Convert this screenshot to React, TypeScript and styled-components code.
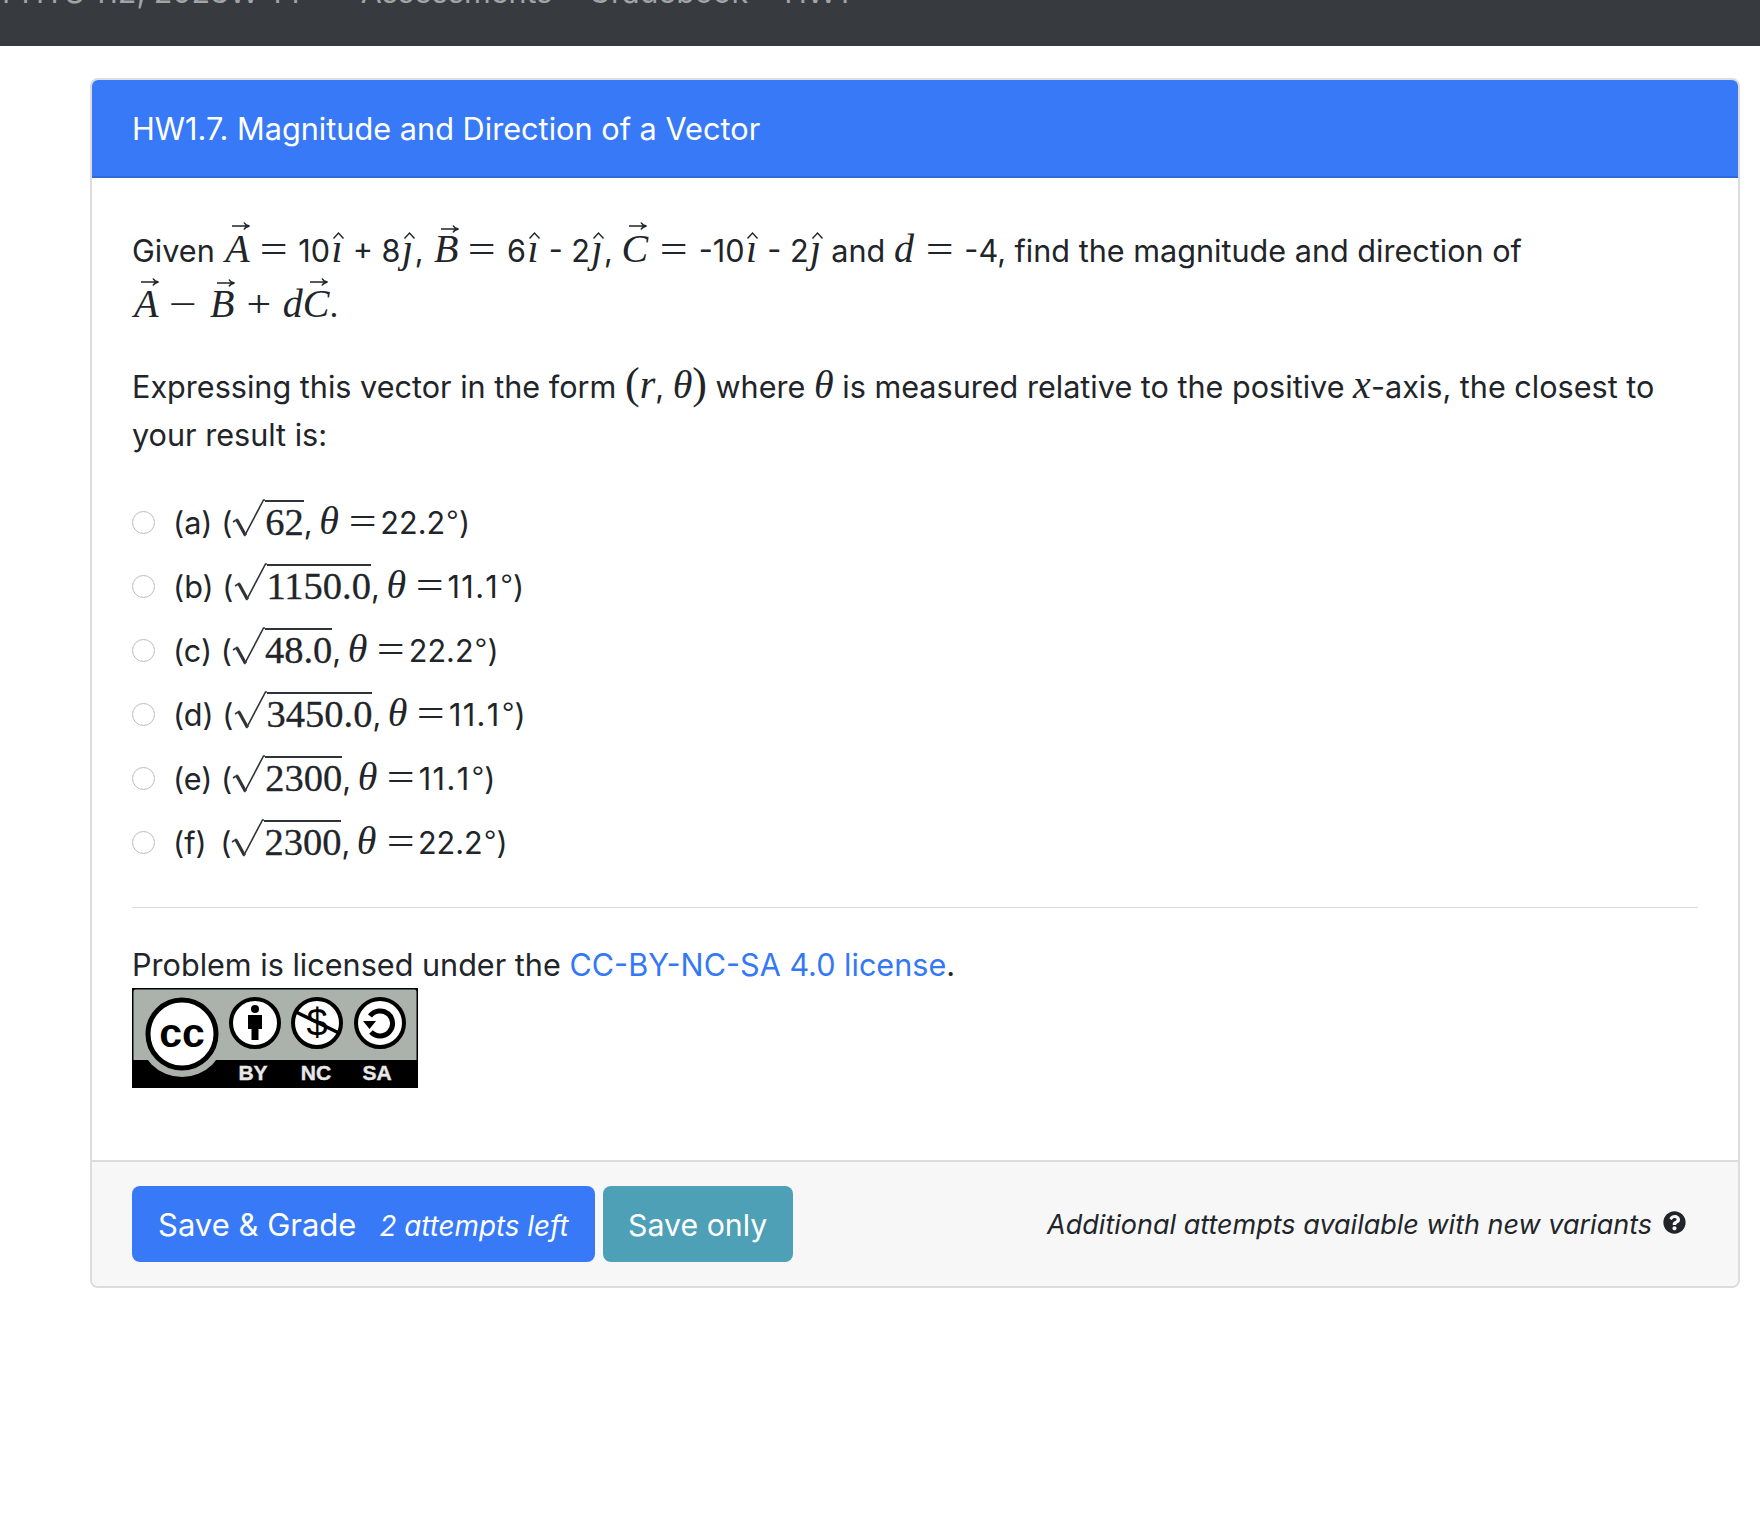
import React from 'react';
import styled, { createGlobalStyle } from 'styled-components';
import { FaQuestionCircle } from 'react-icons/fa';

const colors = {
  text: '#212529',
  blue: '#3779f6',
  blueEdge: '#2f6bdc',
  teal: '#4da0b6',
  line: '#dcdcdc',
  nav: '#373a3f',
  link: '#3578f6',
};

const Global = createGlobalStyle`
  html, body { margin: 0; background: #fff; }
  body {
    font-family: Inter, "Liberation Sans", sans-serif;
    color: ${colors.text};
    font-size: 30.6px;
  }
`;

const Page = styled.div`
  min-height: 1536px;
`;

const NavBar = styled.nav`
  height: 46px;
  background: ${colors.nav};
  overflow: hidden;
  display: flex;
  padding-left: 2px;
  font-size: 30.5px;
  line-height: 40px;
  color: #a2a4a6;
`;

const NavBrand = styled.span`
  margin: -28px 61px 0 0;
  white-space: nowrap;
`;

const NavLink = styled.span`
  margin: -28px 36px 0 0;
  white-space: nowrap;
`;

const Card = styled.section`
  margin: 32px 20px 0 90px;
  border: 2px solid ${colors.line};
  border-radius: 8px;
  overflow: hidden;
`;

const CardHeader = styled.h1`
  margin: 0;
  height: 98px;
  box-sizing: border-box;
  padding: 0 40px;
  display: flex;
  align-items: center;
  background: ${colors.blue};
  border-bottom: 2px solid ${colors.blueEdge};
  color: #fff;
  font-size: 30.7px;
  font-weight: 400;
`;

const CardBody = styled.div`
  padding: 45px 40px 72px 40px;
`;

const Para = styled.p<{ $leading?: number; $after?: number }>`
  margin: 0 0 ${(p) => p.$after ?? 0}px;
  line-height: ${(p) => p.$leading ?? 48}px;
  white-space: nowrap;
`;

const MathI = styled.i`
  font-family: 'Liberation Serif', serif;
  font-size: 40px;
  line-height: 1;
`;

const OptionTheta = styled(MathI)`
  margin-left: -2px;
`;

const MathOp = styled.span<{ $before?: number; $after?: number; $wide?: boolean }>`
  display: inline-block;
  font-family: 'Liberation Serif', serif;
  font-size: 38px;
  line-height: 1;
  transform: scaleX(${(p) => (p.$wide ? 1.15 : 1.3)});
  margin: 0 ${(p) => p.$after ?? 14}px 0 ${(p) => p.$before ?? 15}px;
`;

const Accented = styled.span<{ $pad?: number; $shift?: number }>`
  display: inline-block;
  position: relative;
  line-height: 1;
  padding: 0 ${(p) => p.$pad ?? 0}px;
  margin: 0 ${(p) => -(p.$shift ?? 0)}px 0 ${(p) => p.$shift ?? 0}px;
`;

const AccentMark = styled.svg<{ $left: number; $top: number }>`
  position: absolute;
  left: ${(p) => p.$left}px;
  top: ${(p) => p.$top}px;
  overflow: visible;
`;

const Paren = styled.span`
  font-family: 'Liberation Serif', serif;
  font-size: 44px;
  font-weight: 400;
  line-height: 1;
`;

type VecProps = { children: string; left?: number; top?: number; shift?: number };

const Vec = ({ children, left = 7, top = -8, shift = 2 }: VecProps) => (
  <Accented $shift={shift}>
    <MathI>{children}</MathI>
    <AccentMark $left={left} $top={top} width="18" height="10" viewBox="0 0 18 10">
      <path d="M0 5H16M12 1.5C13 3.5 15 4.5 17.5 5C15 5.5 13 6.5 12 8.5" fill="none" stroke="#212529" strokeWidth="1.5" />
    </AccentMark>
  </Accented>
);

const Hat = ({ children, left = 3, top = 3 }: { children: string; left?: number; top?: number }) => (
  <Accented $pad={1.5}>
    <MathI>{children}</MathI>
    <AccentMark $left={left} $top={top} width="11" height="7" viewBox="0 0 11 7">
      <path d="M0.5 6.5L5.5 1L10.5 6.5" fill="none" stroke="#212529" strokeWidth="1.4" />
    </AccentMark>
  </Accented>
);

const OptionList = styled.div`
  margin: 32px 0;
  display: flex;
  flex-direction: column;
`;

const OptionRow = styled.label`
  height: 64px;
  display: flex;
  align-items: center;
  white-space: pre;
`;

const Radio = styled.input.attrs({ type: 'radio', name: 'answer' })`
  appearance: none;
  box-sizing: border-box;
  width: 23px;
  height: 23px;
  margin: -2px 18px 0 0;
  flex: none;
  border: 1.5px solid #bdbdbd;
  border-radius: 50%;
  background: #fff;
`;

const OptionText = styled.span`
  line-height: 48px;
`;

const OptionKey = styled.span<{ $wide?: boolean }>`
  margin-right: ${(p) => (p.$wide ? 5 : 0)}px;
`;

const Sqrt = styled.span`
  display: inline-flex;
  align-items: flex-start;
  vertical-align: -5px;
  line-height: 1;
`;

const RadicalSign = styled.svg`
  flex: none;
  display: block;
  margin-top: 0;
`;

const Radicand = styled.span`
  border-top: 2px solid #30343a;
  margin-top: 1px;
  padding-top: 4px;
  font-family: 'Liberation Serif', serif;
  font-size: 38.5px;
  line-height: 32px;
  -webkit-text-stroke: 0.3px ${colors.text};
`;

const Angle = styled.span<{ $loose: boolean }>`
  font-kerning: none;
  letter-spacing: ${(p) => (p.$loose ? 1.4 : 0)}px;
`;

const Degree = styled.span`
  font-size: 32px;
  font-family: 'Liberation Sans', sans-serif;
  vertical-align: 2px;
  line-height: 1;
  margin-left: 1px;
`;

const Divider = styled.hr`
  margin: 0 0 33px;
  border: 0;
  border-top: 1px solid #dcdcdc;
`;

const LicenseLink = styled.a`
  color: ${colors.link};
  text-decoration: none;
`;

const Badge = styled.svg`
  display: block;
`;

const CardFooter = styled.footer`
  display: flex;
  align-items: center;
  gap: 8px;
  padding: 24px 40px;
  background: #f7f7f7;
  border-top: 2px solid ${colors.line};
`;

const Button = styled.button<{ $tone: 'blue' | 'teal' }>`
  height: 76px;
  padding: 0 ${(p) => (p.$tone === 'blue' ? 26 : 25.5)}px;
  border: 0;
  border-radius: 8px;
  background: ${(p) => (p.$tone === 'blue' ? colors.blue : colors.teal)};
  color: #fff;
  font-family: inherit;
  font-size: 31px;
  white-space: nowrap;
`;

const TealLabel = styled.span`
  font-size: 30.3px;
`;

const AttemptsNote = styled.i`
  margin-left: 23px;
  font-size: 27.8px;
`;

const VariantsNote = styled.div`
  margin-left: auto;
  display: flex;
  align-items: center;
  gap: 11px;
  font-size: 27px;
  font-style: italic;
`;

const HelpIcon = styled(FaQuestionCircle)`
  width: 23px;
  height: 23px;
  margin: 0 12px 4px 0;
`;

const Radical = () => (
  <RadicalSign width="33" height="40" viewBox="0 0 33 40">
    <path d="M1 23L5 20.5L13 36L31.5 1H33" fill="none" stroke="#30343a" strokeWidth="1.6" />
    <path d="M5 21L13.5 36.5" fill="none" stroke="#30343a" strokeWidth="3.2" />
  </RadicalSign>
);

type Option = { key: string; root: string; angle: string; wide?: boolean };

const options: Option[] = [
  { key: 'a', root: '62', angle: '22.2' },
  { key: 'b', root: '1150.0', angle: '11.1' },
  { key: 'c', root: '48.0', angle: '22.2' },
  { key: 'd', root: '3450.0', angle: '11.1' },
  { key: 'e', root: '2300', angle: '11.1' },
  { key: 'f', root: '2300', angle: '22.2', wide: true },
];

function CcBadge() {
  return (
    <Badge width="286" height="100" viewBox="0 0 286 100">
      <rect width="286" height="100" fill="#000" />
      <path d="M1.5 72V3.5a2 2 0 0 1 2-2H282.5a2 2 0 0 1 2 2V72Z" fill="#aab2ab" />
      <circle cx="50" cy="46" r="43" fill="#aab2ab" />
      <circle cx="50" cy="46" r="34" fill="#fff" stroke="#000" strokeWidth="5" />
      <text x="50" y="59" textAnchor="middle" fontFamily="Liberation Sans" fontWeight="700" fontSize="41" fill="#000">cc</text>

      <circle cx="123" cy="35" r="24" fill="#fff" stroke="#000" strokeWidth="4" />
      <circle cx="123" cy="21" r="4" fill="#000" />
      <path d="M116 27H130V41H126.5V52H119.5V41H116Z" fill="#000" />

      <circle cx="185" cy="35" r="24" fill="#fff" stroke="#000" strokeWidth="4" />
      <text x="185" y="48" textAnchor="middle" fontFamily="Liberation Sans" fontWeight="400" fontSize="38" fill="#000">$</text>
      <path d="M164 24L207 45" stroke="#000" strokeWidth="3.5" />

      <circle cx="248" cy="35" r="24" fill="#fff" stroke="#000" strokeWidth="4" />
      <path d="M238 28A12.5 12.5 0 1 1 239 44" fill="none" stroke="#000" strokeWidth="5" />
      <path d="M231 33H244L237.5 41Z" fill="#000" />

      <g fontFamily="Liberation Sans" fontWeight="700" fontSize="21" fill="#e8e8e8" stroke="#e8e8e8" strokeWidth="0.4" textAnchor="middle">
        <text x="121" y="92">BY</text>
        <text x="184" y="92">NC</text>
        <text x="245" y="92">SA</text>
      </g>
    </Badge>
  );
}

export default function App() {
  return (
    <Page>
      <Global />
      <NavBar>
        <NavBrand>PHYS 112, 2023W T1</NavBrand>
        <NavLink>Assessments</NavLink>
        <NavLink>Gradebook</NavLink>
        <NavLink>HW1</NavLink>
      </NavBar>
      <Card>
        <CardHeader>HW1.7. Magnitude and Direction of a Vector</CardHeader>
        <CardBody>
          <Para $leading={55} $after={29}>
            Given <Vec>A</Vec>
            <MathOp>=</MathOp>10<Hat>ı</Hat> + 8<Hat>ȷ</Hat>, <Vec top={-5}>B</Vec>
            <MathOp>=</MathOp>6<Hat>ı</Hat> - 2<Hat>ȷ</Hat>, <Vec shift={0}>C</Vec>
            <MathOp>=</MathOp>-10<Hat>ı</Hat> - 2<Hat>ȷ</Hat> and <MathI>d</MathI>
            <MathOp>=</MathOp>-4, find the magnitude and direction of
            <br />
            <Vec top={-7}>A</Vec>
            <MathOp $before={16} $after={14}>−</MathOp>
            <Vec top={-6}>B</Vec>
            <MathOp $before={16} $after={13} $wide>+</MathOp>
            <MathI>d</MathI>
            <Vec top={-7} shift={0}>C</Vec>.
          </Para>
          <Para>
            Expressing this vector in the form <Paren>(</Paren>
            <MathI>r</MathI>, <MathI>θ</MathI>
            <Paren>)</Paren> where <MathI>θ</MathI> is measured relative to the positive <MathI>x</MathI>-axis, the
            closest to
            <br />
            your result is:
          </Para>
          <OptionList>
            {options.map((o) => (
              <OptionRow key={o.key}>
                <Radio />
                <OptionText>
                  <OptionKey $wide={o.wide}>({o.key})</OptionKey> (
                  <Sqrt>
                    <Radical />
                    <Radicand>{o.root}</Radicand>
                  </Sqrt>
                  , <OptionTheta>θ</OptionTheta>
                  <MathOp $before={13} $after={7}>=</MathOp>
                  <Angle $loose={o.angle === '11.1'}>{o.angle}</Angle>
                  <Degree>°</Degree>)
                </OptionText>
              </OptionRow>
            ))}
          </OptionList>
          <Divider />
          <Para $leading={47}>
            Problem is licensed under the <LicenseLink href="#">CC-BY-NC-SA 4.0 license</LicenseLink>.
          </Para>
          <CcBadge />
        </CardBody>
        <CardFooter>
          <Button $tone="blue">
            Save &amp; Grade
            <AttemptsNote>2 attempts left</AttemptsNote>
          </Button>
          <Button $tone="teal">
            <TealLabel>Save only</TealLabel>
          </Button>
          <VariantsNote>
            Additional attempts available with new variants
            <HelpIcon />
          </VariantsNote>
        </CardFooter>
      </Card>
    </Page>
  );
}
